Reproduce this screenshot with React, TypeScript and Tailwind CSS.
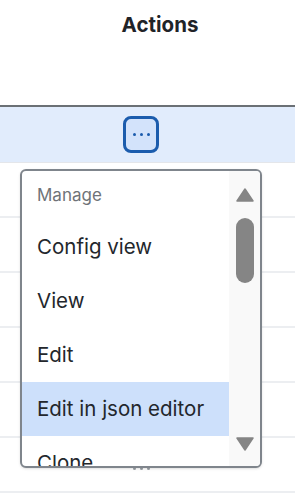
import React from 'react';

const font = { fontFamily: 'Inter, "Noto Sans", sans-serif' };

const items = ['Config view', 'View', 'Edit', 'Edit in json editor', 'Clone'];

function Dots({ className }: { className: string }) {
  return (
    <div className={`flex items-center gap-[4px] ${className}`}>
      <span className="w-[3px] h-[3px] rounded-full bg-current" />
      <span className="w-[3px] h-[3px] rounded-full bg-current" />
      <span className="w-[3px] h-[3px] rounded-full bg-current" />
    </div>
  );
}

function App() {
  return (
    <div className="relative w-[295px] h-[498px] bg-white overflow-hidden" style={font}>
      {/* Header */}
      <div className="h-[107px] border-b-2 border-[#6b7075] flex justify-center pl-[25px] pt-[10px]">
        <span className="text-[20.5px] font-bold text-[#1f2328]">Actions</span>
      </div>

      {/* Rows */}
      <div className="h-[56px] bg-[#e1ecfc] border-b border-[#e4e6ea] flex items-center justify-center pr-[13px]">
        <button className="w-[36px] h-[37px] rounded-[8px] border-[3px] border-[#1b5cad] bg-[#d3e3fb] flex items-center justify-center">
          <Dots className="text-[#1b5cad]" />
        </button>
      </div>
      {[0, 1, 2, 3, 4, 5].map((i) => (
        <div key={i} className="h-[55px] border-b-2 border-[#eceef1] flex items-center justify-center pr-[13px] pt-[8px]">
          <Dots className="text-[#9aa0a6]" />
        </div>
      ))}

      {/* Dropdown menu */}
      <div className="absolute left-[20px] top-[169px] w-[242px] h-[299px] border-2 border-[#7f858c] rounded-[6px] bg-white overflow-hidden flex shadow-sm">
        <div className="w-[207px] flex flex-col">
          <div className="h-[49px] shrink-0 flex items-center pl-[15px] text-[17px] text-[#6f7378]">Manage</div>
          {items.map((t) => (
            <div
              key={t}
              className={`h-[54px] shrink-0 flex items-center pl-[15px] text-[20.5px] text-[#23272c] ${
                t === 'Edit in json editor' ? 'bg-[#cde0fb]' : ''
              }`}
            >
              {t}
            </div>
          ))}
        </div>
        <div className="flex-1 bg-[#f9f9f9] flex flex-col items-center pt-[17px] pb-[15px]">
          <svg width="18" height="14" viewBox="0 0 18 14">
            <path d="M9 1 L17 13 L1 13 Z" fill="#858585" strokeLinejoin="round" stroke="#858585" strokeWidth="1.5" />
          </svg>
          <div className="mt-[16px] w-[18px] h-[65px] rounded-full bg-[#858585]" />
          <div className="flex-1" />
          <svg width="18" height="14" viewBox="0 0 18 14">
            <path d="M1 1 L17 1 L9 13 Z" fill="#858585" strokeLinejoin="round" stroke="#858585" strokeWidth="1.5" />
          </svg>
        </div>
      </div>
    </div>
  );
}

export default App;
